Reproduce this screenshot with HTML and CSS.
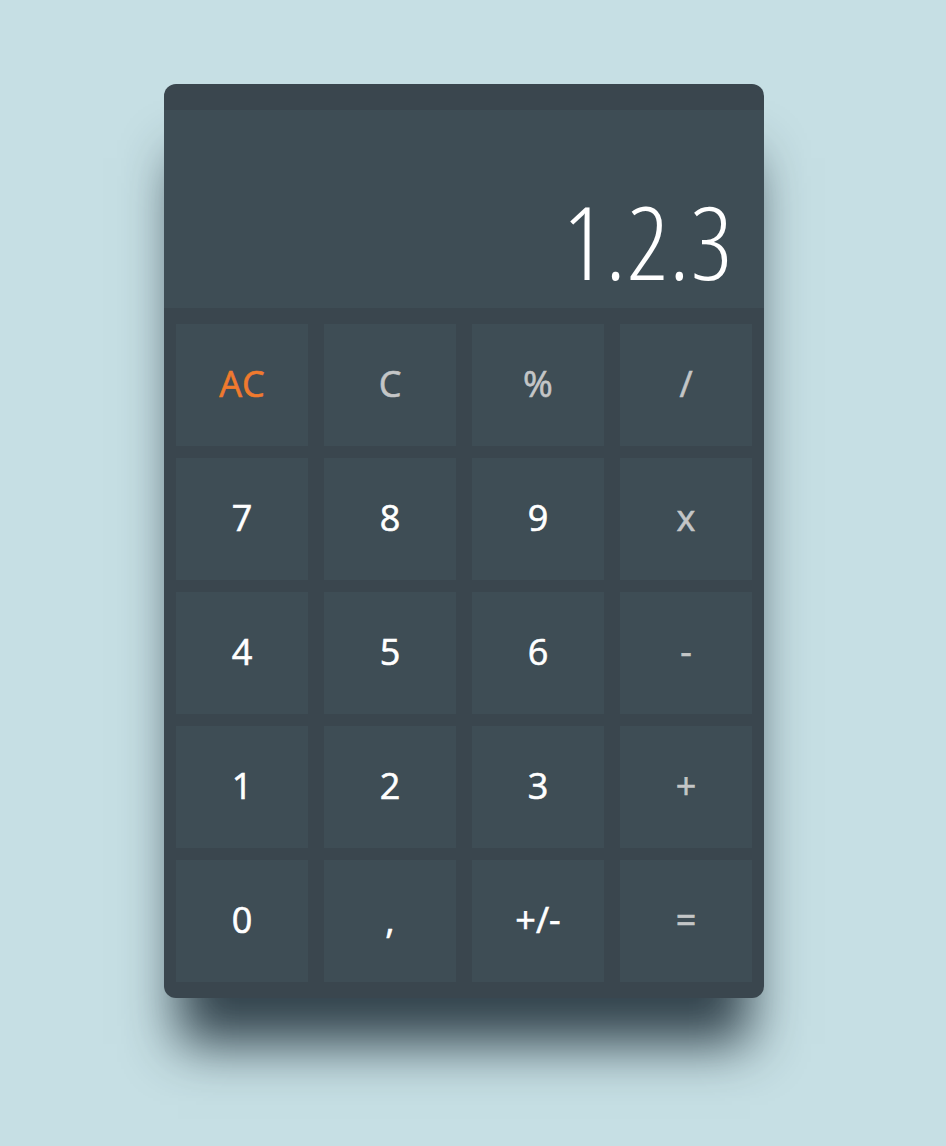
FILE: index.html
```html
<!DOCTYPE html>
<html lang="en">
<head>
<meta charset="utf-8">
<title>Calculator</title>
<link rel="stylesheet" href="styles.css">
</head>
<body>
<div class="calc">
  <div class="topbar"></div>
  <div class="display"><span class="value">1.2.3</span></div>
  <div class="keys">
    <div class="key accent">AC</div>
    <div class="key op">C</div>
    <div class="key op">%</div>
    <div class="key op">/</div>
    <div class="key">7</div>
    <div class="key">8</div>
    <div class="key">9</div>
    <div class="key op">x</div>
    <div class="key">4</div>
    <div class="key">5</div>
    <div class="key">6</div>
    <div class="key op">-</div>
    <div class="key">1</div>
    <div class="key">2</div>
    <div class="key">3</div>
    <div class="key op">+</div>
    <div class="key">0</div>
    <div class="key">,</div>
    <div class="key">+/-</div>
    <div class="key op">=</div>
  </div>
</div>
</body>
</html>
```
FILE: styles.css
```css
html, body {
  margin: 0;
  padding: 0;
}
body {
  background: #c6dfe4;
  font-family: "Open Sans", "Noto Sans", sans-serif;
  min-height: 1146px;
}
.calc {
  width: 600px;
  margin: 84px 0 0 164px;
  background: #3a464e;
  border-radius: 12px;
  overflow: hidden;
  box-shadow: 0 60px 50px -14px rgba(34, 50, 60, 0.9);
}
.topbar {
  height: 26px;
}
.display {
  height: 198px;
  background: #3e4d55;
  display: flex;
  justify-content: flex-end;
  align-items: flex-end;
  padding: 0 31px 0 0;
  box-sizing: border-box;
}
.value {
  color: #ffffff;
  font-weight: 300;
  font-size: 102px;
  font-stretch: 75%;
  line-height: 1;
  margin-bottom: 16px;
  letter-spacing: 1px;
}
.keys {
  display: grid;
  grid-template-columns: repeat(4, 132px);
  grid-auto-rows: 122px;
  column-gap: 16px;
  row-gap: 12px;
  padding: 16px 12px;
}
.key {
  background: #3e4d55;
  color: #ffffff;
  font-size: 36px;
  font-weight: 400;
  -webkit-text-stroke: 0.6px currentColor;
  display: flex;
  align-items: center;
  justify-content: center;
  padding-bottom: 4px;
  box-sizing: border-box;
}
.key.op {
  color: #c4c6c7;
}
.key.accent {
  color: #f07a2e;
}
```
